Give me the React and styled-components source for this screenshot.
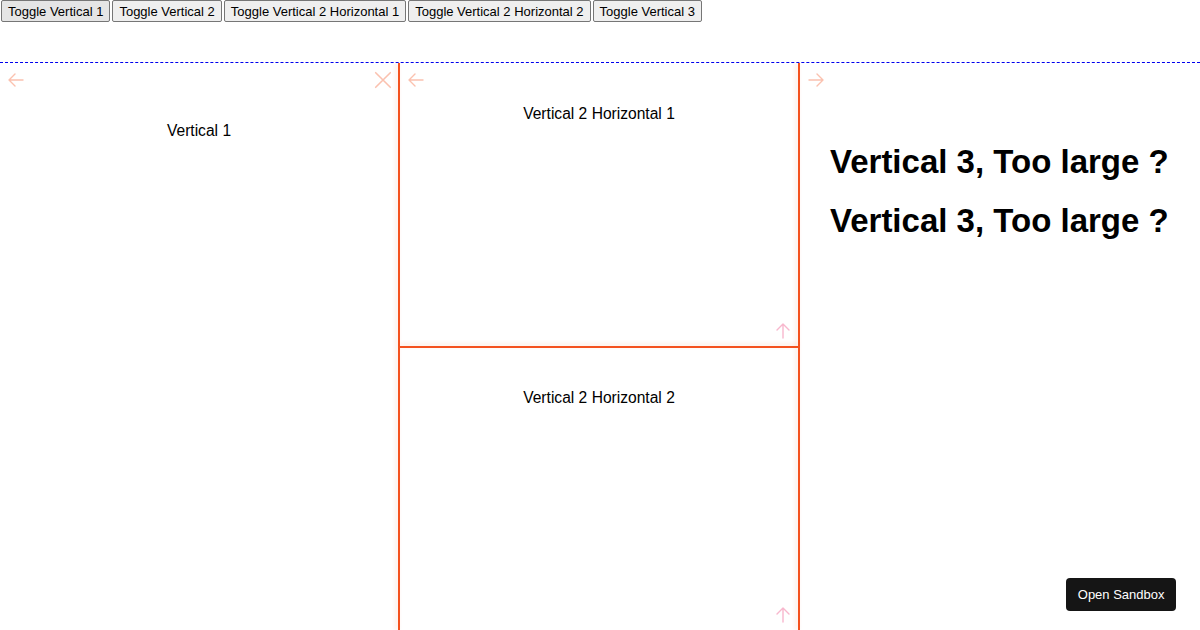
import React from 'react';
import styled, {createGlobalStyle} from 'styled-components';

const GlobalStyle = createGlobalStyle`
  html, body {
    margin: 0;
    padding: 0;
    height: 100%;
    overflow: hidden;
    background: #fff;
    font-family: "Liberation Sans", Arial, sans-serif;
  }
`

const Page = styled.div`
  display: flex;
  flex-direction: column;
  height: 100vh;
`

const Toolbar = styled.div`
  display: flex;
  gap: 2px;
  padding-left: 1px;
  height: 22px;
`

const ToggleButton = styled.button`
  font-family: "Liberation Sans", Arial, sans-serif;
  font-size: 13px;
  color: #000;
  background: ${props => props.active ? '#e5e5e5' : '#efefef'};
  border: 1px solid #767676;
  border-radius: 2px;
  padding: 1px 6px;
  height: 22px;
  cursor: pointer;
`

const Layout = styled.div`
  flex: 1;
  margin-top: 40px;
  border-top: 1px dashed #0000ee;
  display: flex;
  min-height: 0;
`

const Column = styled.div`
  flex: ${props => props.grow || 398} 1 0;
  display: flex;
  flex-direction: column;
  min-width: 0;
`

const VDivider = styled.div`
  width: 2px;
  background: #f4511e;
  box-shadow: -2px 0 4px rgba(244, 81, 30, 0.18);
`

const HDivider = styled.div`
  height: 2px;
  background: #f4511e;
  box-shadow: 0 -2px 4px rgba(244, 81, 30, 0.18);
`

const Pane = styled.div`
  flex: 1;
  display: flex;
  flex-direction: column;
  min-height: 0;
`

const PaneHeader = styled.div`
  display: flex;
  justify-content: space-between;
  align-items: center;
  padding: 9px 6px 0 8px;
  height: 16px;
  color: #f4511e;
  opacity: 0.35;
`

const PaneFooter = styled.div`
  margin-top: auto;
  display: flex;
  justify-content: flex-end;
  padding: 0 7px 7px 0;
  color: #f06292;
  opacity: 0.45;
`

const PaneText = styled.p`
  margin: ${props => props.offset || 17}px 0 0;
  text-align: center;
  font-size: 15.6px;
  color: #000;
`

const WideContent = styled.div`
  padding: 34px 30px 0;
`

const Heading = styled.h1`
  font-size: 33px;
  font-weight: 700;
  margin: 21px 0;
  white-space: nowrap;
  color: #000;
`

const SandboxButton = styled.button`
  position: fixed;
  right: 24px;
  bottom: 19px;
  background: #151515;
  color: #fff;
  border: none;
  border-radius: 4px;
  font-family: "Liberation Sans", Arial, sans-serif;
  font-size: 13px;
  padding: 9px 11.5px;
  height: 33px;
  cursor: pointer;
`

const Icon = ({kind, size = 16}) => {
    const paths = {
        left: 'M15 8H1M7 2L1 8l6 6',
        right: 'M1 8h14M9 2l6 6-6 6',
        up: 'M8 15V1M2 7l6-6 6 6',
        close: 'M1.5 1.5l13 13M14.5 1.5l-13 13',
    };
    return (
        <svg width={size} height={size} viewBox="0 0 16 16" fill="none"
             stroke="currentColor" strokeWidth="1.4" strokeLinecap="round" strokeLinejoin="round">
            <path d={paths[kind]}/>
        </svg>
    );
};

const toggles = [
    'Toggle Vertical 1',
    'Toggle Vertical 2',
    'Toggle Vertical 2 Horizontal 1',
    'Toggle Vertical 2 Horizontal 2',
    'Toggle Vertical 3',
];

const App = () => {
    return (
        <Page>
            <GlobalStyle/>
            <Toolbar>
                {toggles.map((label, i) => (
                    <ToggleButton key={label} active={i === 0}>{label}</ToggleButton>
                ))}
            </Toolbar>
            <Layout>
                <Column>
                    <Pane>
                        <PaneHeader>
                            <Icon kind="left"/>
                            <Icon kind="close" size={18}/>
                        </PaneHeader>
                        <PaneText offset={34}>Vertical 1</PaneText>
                    </Pane>
                </Column>
                <VDivider/>
                <Column>
                    <Pane>
                        <PaneHeader>
                            <Icon kind="left"/>
                        </PaneHeader>
                        <PaneText>Vertical 2 Horizontal 1</PaneText>
                        <PaneFooter>
                            <Icon kind="up"/>
                        </PaneFooter>
                    </Pane>
                    <HDivider/>
                    <Pane>
                        <PaneHeader/>
                        <PaneText offset={16}>Vertical 2 Horizontal 2</PaneText>
                        <PaneFooter>
                            <Icon kind="up"/>
                        </PaneFooter>
                    </Pane>
                </Column>
                <VDivider/>
                <Column grow={400}>
                    <Pane>
                        <PaneHeader>
                            <Icon kind="right"/>
                        </PaneHeader>
                        <WideContent>
                            <Heading>Vertical 3, Too large ?</Heading>
                            <Heading>Vertical 3, Too large ?</Heading>
                        </WideContent>
                    </Pane>
                </Column>
            </Layout>
            <SandboxButton>Open Sandbox</SandboxButton>
        </Page>
    );
};

export default App;
